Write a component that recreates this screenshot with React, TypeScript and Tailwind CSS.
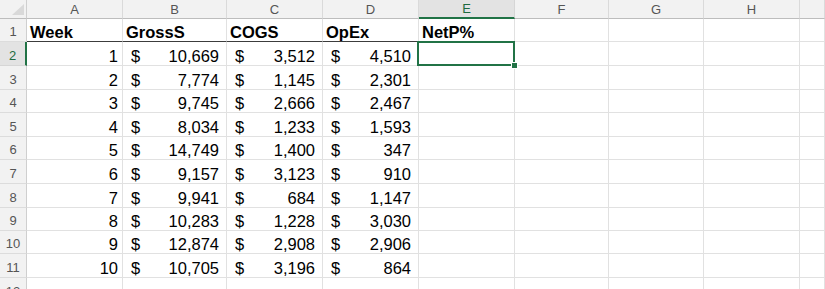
import React from "react";

type Row = { week: number; gross: string; cogs: string; opex: string };

const rows: Row[] = [
  { week: 1, gross: "10,669", cogs: "3,512", opex: "4,510" },
  { week: 2, gross: "7,774", cogs: "1,145", opex: "2,301" },
  { week: 3, gross: "9,745", cogs: "2,666", opex: "2,467" },
  { week: 4, gross: "8,034", cogs: "1,233", opex: "1,593" },
  { week: 5, gross: "14,749", cogs: "1,400", opex: "347" },
  { week: 6, gross: "9,157", cogs: "3,123", opex: "910" },
  { week: 7, gross: "9,941", cogs: "684", opex: "1,147" },
  { week: 8, gross: "10,283", cogs: "1,228", opex: "3,030" },
  { week: 9, gross: "12,874", cogs: "2,908", opex: "2,906" },
  { week: 10, gross: "10,705", cogs: "3,196", opex: "864" },
];

const letters = ["A", "B", "C", "D", "E", "F", "G", "H", ""];

// row heights after the column header (row 1..12)
const heights = ["h-[23px]", "h-[24px]", "h-[24px]", "h-[23px]", "h-[24px]", "h-[23px]", "h-[24px]", "h-[24px]", "h-[23px]", "h-[23px]", "h-[24px]", "h-[24px]"];

const cell = "border-r border-b border-[#e1e1e1] min-w-0";

function RowHead({ n, h }: { n: number; h: string }) {
  const sel = n === 2;
  return (
    <div
      className={`${h} flex items-end justify-center pb-[3px] text-[13px] leading-none border-b ${
        sel
          ? "bg-[#e3e3e3] text-[#1e6b40] border-r-2 border-r-[#217346] border-b-[#d6d6d6]"
          : "bg-[#f2f2f2] text-[#555] border-r border-r-[#cfcfcf] border-b-[#dcdcdc]"
      }`}
    >
      {n}
    </div>
  );
}

function Money({ v, last }: { v: string; last?: boolean }) {
  return (
    <div className={`${cell} flex items-end justify-between pl-2 pr-[7px] pb-px ${last ? "" : ""}`}>
      <span>$</span>
      <span>{v}</span>
    </div>
  );
}

function Empty({ n }: { n: number }) {
  return (
    <>
      <div className={cell} />
      <div className={cell} />
      <div className={cell} />
      <div className={cell} />
    </>
  );
}

export default function App() {
  return (
    <div className="w-[825px] h-[289px] overflow-hidden bg-white text-black font-['Liberation_Sans',Arial,sans-serif]">
      <div className="grid grid-cols-[27px_96px_104px_96px_96px_96px_94px_95px_96px_1fr] text-[16.5px] leading-none">
        {/* column header */}
        <div className="h-[19px] relative bg-[#f2f2f2] border-r border-r-[#cfcfcf] border-b border-b-[#bdbdbd]">
          <svg className="absolute left-[12px] top-[4px]" width="12" height="11" viewBox="0 0 12 11">
            <path d="M12 0 L12 11 L0 11 Z" fill="#d9d9d9" />
          </svg>
        </div>
        {letters.map((l) =>
          l === "E" ? (
            <div
              key={l}
              className="h-[19px] flex items-center justify-center text-[13px] text-[#1e6b40] bg-[#e3e3e3] border-r border-r-[#d6d6d6] border-b-2 border-b-[#217346]"
            >
              {l}
            </div>
          ) : (
            <div
              key={l || "i"}
              className="h-[19px] flex items-center justify-center text-[13px] text-[#555] bg-[#f2f2f2] border-r border-r-[#dadada] border-b border-b-[#bdbdbd]"
            >
              {l}
            </div>
          )
        )}

        {/* row 1 */}
        <RowHead n={1} h={heights[0]} />
        {["Week", "GrossS", "COGS", "OpEx"].map((t) => (
          <div
            key={t}
            className={`${heights[0]} border-r border-r-[#e1e1e1] border-b border-b-[#3c3c3c] flex items-end pl-[3px] pb-px font-bold`}
          >
            {t}
          </div>
        ))}
        <div className={`${cell} flex items-end pl-[3px] pb-px font-bold`}>NetP%</div>
        <Empty n={1} />

        {/* data rows */}
        {rows.map((r, i) => {
          const h = heights[i + 1];
          return (
            <React.Fragment key={r.week}>
              <RowHead n={i + 2} h={h} />
              <div className={`${cell} ${h} flex items-end justify-end pr-[4px] pb-px`}>{r.week}</div>
              <Money v={r.gross} />
              <Money v={r.cogs} />
              <Money v={r.opex} />
              {i === 0 ? (
                <div className={`${cell} relative`}>
                  <div className="absolute -left-[2px] -top-px -right-px -bottom-px border-2 border-[#217346] z-10" />
                  <div className="absolute -right-[4px] -bottom-[4px] w-[7px] h-[7px] bg-[#217346] border border-white z-20" />
                </div>
              ) : (
                <div className={cell} />
              )}
              <Empty n={i} />
            </React.Fragment>
          );
        })}

        {/* row 12 */}
        <RowHead n={12} h={heights[11]} />
        {letters.map((l) => (
          <div key={"r12" + l} className={`${cell} ${heights[11]}`} />
        ))}
      </div>
    </div>
  );
}
